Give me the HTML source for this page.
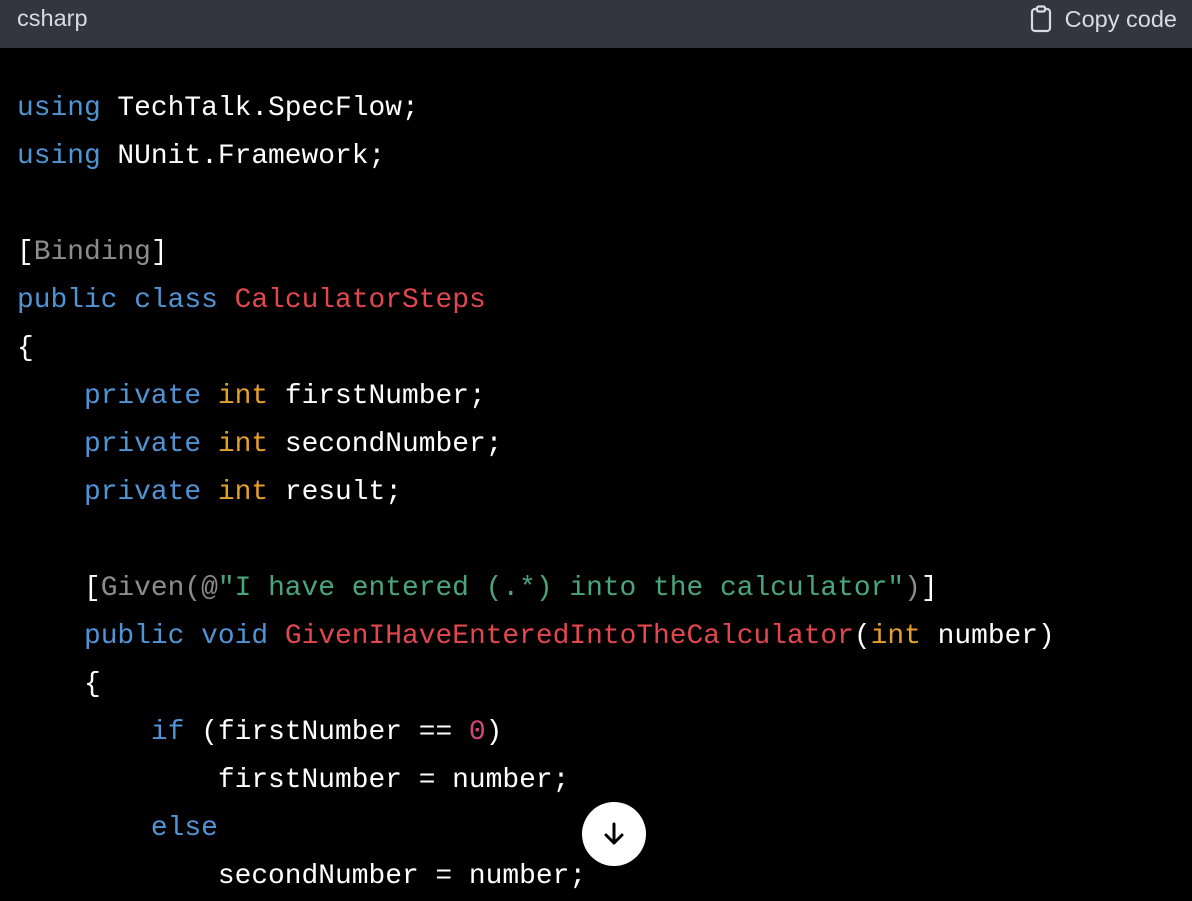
<!DOCTYPE html>
<html><head><meta charset="utf-8"><style>
html,body{margin:0;padding:0;background:#000;width:1192px;height:896px;overflow:hidden}
.hdr{height:48px;background:#343541;position:relative;font-family:"Liberation Sans",sans-serif;font-size:23.5px;color:#d9d9e3}
.hdr .l{position:absolute;left:17px;top:5px}
.hdr .r{position:absolute;right:15px;top:5px;display:flex;align-items:center;gap:13px}
pre{margin:0;position:absolute;left:17px;top:85px;font-family:"Liberation Mono",monospace;font-size:27.9px;line-height:48px;color:#fff}
.k{color:#4f94d4}.t{color:#e2474e}.s{color:#4aa57d}.b{color:#e5a029}.n{color:#d6447c}.m{color:rgba(255,255,255,.55)}
.btn{position:absolute;left:582px;top:802px;width:64px;height:64px;border-radius:50%;background:#fff;display:flex;align-items:center;justify-content:center}
</style></head><body>
<div class="hdr"><span class="l">csharp</span><span class="r"><svg width="22" height="28" viewBox="0 0 22 28" fill="none" stroke="#d9d9e3" stroke-width="2.2" stroke-linejoin="round"><rect x="2" y="4" width="18" height="22" rx="3"/><rect x="7" y="1.5" width="8" height="5" rx="1.5" fill="#343541"/></svg>Copy code</span></div>
<pre><span class="k">using</span> TechTalk.SpecFlow;
<span class="k">using</span> NUnit.Framework;

[<span class="m">Binding</span>]
<span class="k">public</span> <span class="k">class</span> <span class="t">CalculatorSteps</span>
{
    <span class="k">private</span> <span class="b">int</span> firstNumber;
    <span class="k">private</span> <span class="b">int</span> secondNumber;
    <span class="k">private</span> <span class="b">int</span> result;

    [<span class="m">Given(@</span><span class="s">"I have entered (.*) into the calculator"</span><span class="m">)</span>]
    <span class="k">public</span> <span class="k">void</span> <span class="t">GivenIHaveEnteredIntoTheCalculator</span>(<span class="b">int</span> number)
    {
        <span class="k">if</span> (firstNumber == <span class="n">0</span>)
            firstNumber = number;
        <span class="k">else</span>
            secondNumber = number;
</pre>
<div class="btn"><svg width="30" height="30" viewBox="0 0 30 30" fill="none" stroke="#000" stroke-width="3" stroke-linecap="round" stroke-linejoin="round"><path d="M15 5v19M7 16l8 8 8-8"/></svg></div>
</body></html>
